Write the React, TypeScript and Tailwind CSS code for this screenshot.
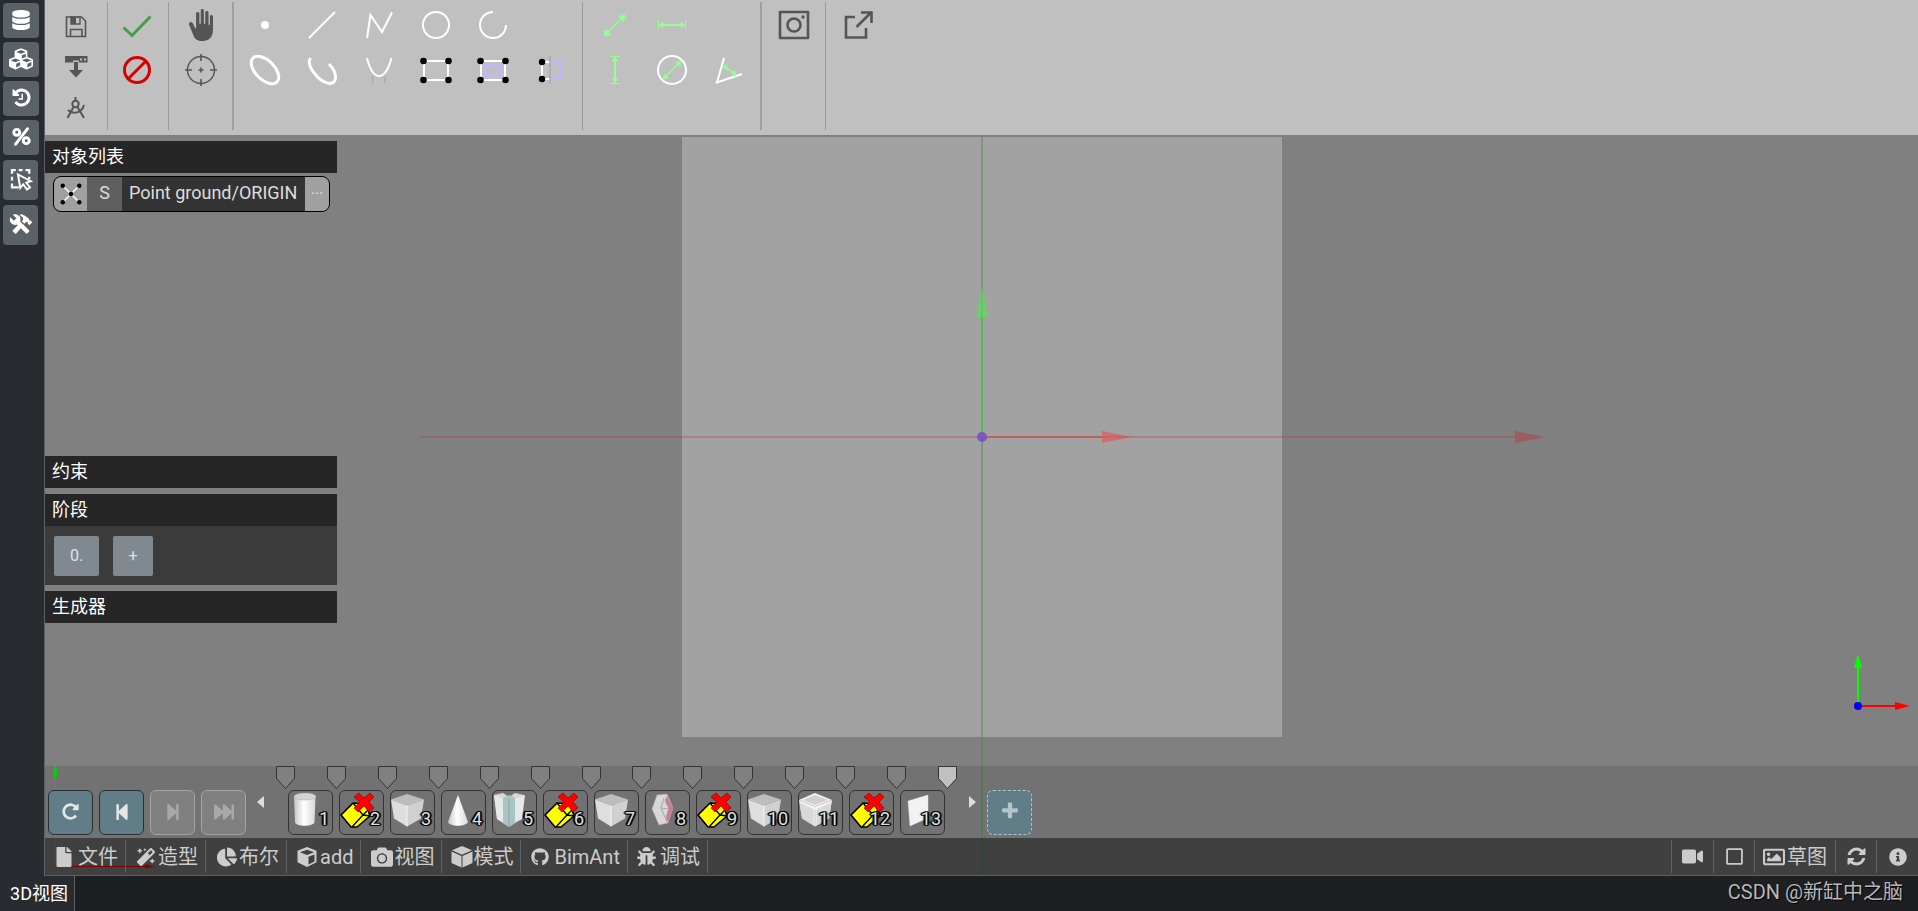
import type { ReactNode } from "react";
import {
  FaDatabase, FaCubes, FaFile, FaMagic, FaChartPie, FaCamera, FaGithub, FaBug,
  FaVideo, FaRegSquare, FaRegImage, FaInfoCircle, FaStepBackward, FaStepForward, FaFastForward,
} from "react-icons/fa";
import { IoMdConstruct } from "react-icons/io";
import { IoHandRight } from "react-icons/io5";

const font = "font-[Roboto,'Noto_Sans_CJK_SC',sans-serif]";

function Glyph({ size = "size-8", children }: { size?: string; children: ReactNode }) {
  return (
    <svg viewBox="0 0 32 32" className={size} fill="none" aria-hidden="true">
      {children}
    </svg>
  );
}

const boldPaths = {
  plus: "M1600 736v192q0 40-28 68t-68 28h-416v416q0 40-28 68t-68 28h-192q-40 0-68-28t-28-68v-416h-416q-40 0-68-28t-28-68v-192q0-40 28-68t68-28h416v-416q0-40 28-68t68-28h192q40 0 68 28t28 68v416h416q40 0 68 28t28 68z",
  repeat: "M1664 256v448q0 26-19 45t-45 19h-448q-42 0-59-40-17-39 14-69l138-138q-148-137-349-137-104 0-198.500 40.500t-163.500 109.500-109.500 163.500-40.500 198.500 40.500 198.500 109.500 163.500 163.500 109.500 198.500 40.500q119 0 225-52t179-147q7-10 23-12 15 0 25 9l137 138q9 8 9.500 20.500t-7.500 22.500q-109 132-264 204.500t-327 72.500q-156 0-298-61t-245-164-164-245-61-298 61-298 164-245 245-164 298-61q147 0 284.500 55.500t244.500 156.500l130-129q29-31 70-14 39 17 39 59z",
  history: "M1664 896q0 156-61 298t-164 245-245 164-298 61q-172 0-327-72.500t-264-204.500q-7-10-6.500-22.500t8.500-20.500l137-138q10-9 25-9 16 2 23 12 73 95 179 147t225 52q104 0 198.500-40.500t163.500-109.500 109.500-163.500 40.500-198.500-40.500-198.500-109.500-163.500-163.500-109.500-198.500-40.500q-98 0-188 35.500t-160 101.500l137 138q31 30 14 69-17 40-59 40h-448q-26 0-45-19t-19-45v-448q0-42 40-59 39-17 69 14l130 129q107-101 244.500-156.500t284.500-55.500q156 0 298 61t245 164 164 245 61 298zm-640-288v448q0 14-9 23t-23 9h-320q-14 0-23-9t-9-23v-64q0-14 9-23t23-9h224v-352q0-14 9-23t23-9h64q14 0 23 9t9 23z",
  refresh: "M1639 1056q0 5-1 7-64 268-268 434.500t-478 166.500q-146 0-282.500-55t-243.500-157l-129 129q-19 19-45 19t-45-19-19-45v-448q0-26 19-45t45-19h448q26 0 45 19t19 45-19 45l-137 137q71 66 161 102t187 36q134 0 250-65t186-179q11-17 53-117 8-23 30-23h192q13 0 22.500 9.500t9.500 22.500zm25-800v448q0 26-19 45t-45 19h-448q-26 0-45-19t-19-45 19-45l138-138q-148-137-349-137-134 0-250 65t-186 179q-11 17-53 117-8 23-30 23h-199q-13 0-22.500-9.500t-9.500-22.500v-7q65-268 270-434.500t480-166.500q146 0 284 55.500t245 156.500l130-129q19-19 45-19t45 19 19 45z",
};

function BoldIcon({ name, size }: { name: keyof typeof boldPaths; size: string }) {
  return (
    <svg viewBox="0 0 1792 1792" className={size} fill="currentColor" aria-hidden="true">
      <path d={boldPaths[name]} />
    </svg>
  );
}

const SaveIcon = (
  <Glyph>
    <path d="M6.500 6h15l4 4v15.500h-19z" stroke="#555" strokeWidth="1.600" />
    <path d="M11 6h9v7h-9z" stroke="#555" strokeWidth="1.400" />
    <path d="M11 6h5v7h-5z" fill="#555" />
    <path d="M10.500 25v-6.500h11.500v6.500" stroke="#555" strokeWidth="1.600" />
  </Glyph>
);
const ImportIcon = (
  <Glyph>
    <path d="M5 5h22.500v6.500H5z" fill="#555" />
    <path d="M20 7.500h2v2h-2zM24 7.500h2v2h-2z" fill="#c0c0c0" />
    <path d="M13 9.500h6v2h-6z" fill="#c0c0c0" />
    <path d="M14 11h4v8h5l-7 7.500-7-7.500h5z" fill="#555" />
  </Glyph>
);
const CompassIcon = (
  <Glyph>
    <g stroke="#555" strokeWidth="2">
      <circle cx="15.500" cy="12" r="3.200" />
      <path d="M15.500 5v4M13.500 15L7.500 26M17.500 15L24 26M8 18c5 5 14 3 16-5" />
    </g>
  </Glyph>
);
const CheckIcon = (
  <Glyph><path d="M2.500 18.500l8.500 8L29.500 7.500" stroke="#43a047" strokeWidth="3" /></Glyph>
);
const CancelIcon = (
  <Glyph>
    <circle cx="16" cy="16" r="12.500" stroke="#d50000" strokeWidth="3" />
    <path d="M7.500 24.500l17-17" stroke="#d50000" strokeWidth="3" />
  </Glyph>
);
const CrossIcon = (
  <Glyph>
    <circle cx="16" cy="16" r="13.500" stroke="#555" strokeWidth="1.400" />
    <path d="M16 0v7M16 25v7M0 16h7M25 16h7" stroke="#555" strokeWidth="1.600" />
    <path d="M16 13.500v5M13.500 16h5" stroke="#555" strokeWidth="1.600" />
  </Glyph>
);
const CaptureIcon = (
  <Glyph>
    <path d="M2 3h28v26H2z" stroke="#555" strokeWidth="2.600" strokeLinejoin="round" />
    <circle cx="16" cy="16" r="6.500" stroke="#555" strokeWidth="2.600" />
    <path d="M23.500 6.500h3v3h-3z" fill="#555" />
  </Glyph>
);
const ExternalIcon = (
  <Glyph>
    <path d="M13 8H4v20.500h20V19M14.500 18L28 4.500M19 3.500h10.500V14" stroke="#555" strokeWidth="2.600" />
  </Glyph>
);

const corners = (
  <g fill="#000">
    <circle cx="3.500" cy="7" r="3.300" />
    <circle cx="28.500" cy="7" r="3.300" />
    <circle cx="3.500" cy="26" r="3.300" />
    <circle cx="28.500" cy="26" r="3.300" />
  </g>
);

const sketchTools: [string, ReactNode][] = [
  ["Point", <circle cx="16" cy="16" r="4" fill="#fff" />],
  ["Line", <path d="M3 29L29 3" stroke="#fff" strokeWidth="2" />],
  ["Polyline", <path d="M4 29L7.500 6l11.500 17L29 3.500" stroke="#fff" strokeWidth="2" />],
  ["Circle", <circle cx="16" cy="16" r="13" stroke="#fff" strokeWidth="2" />],
  ["Arc", <path d="M16 3a13 13 0 1 0 13 13" stroke="#fff" strokeWidth="2" />],
  ["", null],
  ["Ellipse", <ellipse cx="16" cy="16" rx="17" ry="9.500" transform="rotate(45 16 16)" stroke="#fff" strokeWidth="3" />],
  ["Ellipse arc", <path d="M4.500 4C-.500 11 13 29 24 29.500C32 29 31 18 23 10" stroke="#fff" strokeWidth="3" />],
  ["Curve", <><path d="M9.500 22v7M22.500 22l-1 7" stroke="#aaa" strokeWidth="1.400" /><path d="M4 4c6 24 18 24 24.500 0" stroke="#fff" strokeWidth="2" /></>],
  ["Rectangle", <><path d="M4 7h24v19H4z" stroke="#fff" strokeWidth="2" />{corners}</>],
  ["Offset", <><path d="M4 7h24v19H4z" stroke="#fff" strokeWidth="2" /><path d="M8 11h16v11H8z" fill="#c0c0c0" stroke="#c0b8f8" strokeWidth="3" />{corners}</>],
  ["Mirror", <><path d="M16 8H8v17h8" stroke="#fff" strokeWidth="2" /><path d="M17 8h9v17h-9" stroke="#c0b8f8" strokeWidth="2.400" /><path d="M16 2v28" stroke="#aaa" strokeWidth="1.500" /><g fill="#000"><circle cx="8" cy="8" r="3.200" /><circle cx="8" cy="25" r="3.200" /></g></>],
];

const green = "#98fb98";
const dimensionTools: [string, ReactNode][] = [
  ["Distance", <g stroke={green} fill={green}><path d="M7 25L25 7" strokeWidth="1.600" /><path d="M4 22l5 6M22 4l6 6" /><path d="M5 27l1.500-6.500 5 5zM26 6l-6.500 1.500 5 5z" /></g>],
  ["Horizontal dimension", <g stroke={green} fill={green}><path d="M5 16h22" strokeWidth="2" /><path d="M2.500 11v10M29.500 11v10" /><path d="M3 16l4-2.500v5zM29 16l-4-2.500v5z" /></g>],
  ["", null],
  ["Vertical dimension", <g stroke={green} fill={green}><path d="M16 5v22" strokeWidth="2" /><path d="M11 2.500h10M11 29.500h10" /><path d="M16 3l-2.500 4h5zM16 29l-2.500-4h5z" /></g>],
  ["Diameter", <><circle cx="16" cy="16" r="14" stroke="#fff" strokeWidth="2" /><g stroke={green} fill={green}><path d="M8 24L24 8" strokeWidth="1.600" /><path d="M7 25l1.500-5 4 4zM25 7l-5 1.500 4 4z" /></g></>],
  ["Angle", <><path d="M11 4L4 28.500l25-8.500" stroke="#fff" strokeWidth="2" /><g stroke={green} fill={green}><path d="M10 13q8 1 11 9" fill="none" strokeWidth="1.600" /><path d="M9.500 12.500l4.500-1.500v5zM21.500 22.500l2-5h-5z" /></g></>],
];

function Tool({ label, children }: { label: string; children: ReactNode }) {
  return (
    <button type="button" aria-label={label} className="flex h-[45px] w-[57px] items-center justify-center">
      {children}
    </button>
  );
}

function ToolGrid({ tools, cols }: { tools: [string, ReactNode][]; cols: string }) {
  return (
    <div className={`grid ${cols}`}>
      {tools.map(([label, art], i) =>
        label ? <Tool key={i} label={label}><Glyph>{art}</Glyph></Tool> : <span key={i} />
      )}
    </div>
  );
}

function Toolbar() {
  return (
    <div className="flex h-[135px] shrink-0 bg-[#c0c0c0] pt-[2px] pb-[5px]">
      <div className="flex w-[63px] flex-col items-center border-r border-[#999] pt-[6px]">
        <button type="button" aria-label="Save" className="h-[37px]">{SaveIcon}</button>
        <button type="button" aria-label="Export" className="h-[43px]">{ImportIcon}</button>
        <button type="button" aria-label="Drafting" className="h-10">{CompassIcon}</button>
      </div>
      <div className="flex w-[61px] flex-col items-start border-r border-[#999]">
        <Tool label="Accept">{CheckIcon}</Tool>
        <Tool label="Cancel">{CancelIcon}</Tool>
      </div>
      <div className="border-r-2 border-[#a0a0a0] px-[3px]">
        <Tool label="Pan"><IoHandRight className="size-8 text-[#555]" /></Tool>
        <Tool label="Center view">{CrossIcon}</Tool>
      </div>
      <div className="border-r border-[#999] pr-1 pl-[2px]"><ToolGrid tools={sketchTools} cols="grid-cols-6" /></div>
      <div className="border-r-2 border-[#a0a0a0] px-[3px]"><ToolGrid tools={dimensionTools} cols="grid-cols-3" /></div>
      <div className="border-r border-[#999] px-[3px]"><Tool label="Screenshot">{CaptureIcon}</Tool></div>
      <div className="px-[3px]"><Tool label="Open outside">{ExternalIcon}</Tool></div>
    </div>
  );
}

function SideButton({ label, children, tall }: { label: string; children: ReactNode; tall?: boolean }) {
  return (
    <button type="button" aria-label={label} className={`flex items-center justify-center rounded bg-[#5a6268] pb-[2px] text-white ${tall ? "mt-px h-10 w-[35px]" : "h-[35px] w-9"}`}>
      {children}
    </button>
  );
}

function Sidebar() {
  return (
    <nav className="flex w-[45px] shrink-0 flex-col gap-1 border-r border-[#5a6268] bg-[#282c30] pt-[3px] pl-[3px]">
      <SideButton label="Data"><FaDatabase className="size-5" /></SideButton>
      <SideButton label="Models"><FaCubes className="size-6" /></SideButton>
      <SideButton label="History"><BoldIcon name="history" size="size-[21px]" /></SideButton>
      <SideButton label="Expressions">
        <Glyph size="size-[19px]">
          <g stroke="#fff" strokeWidth="5">
            <circle cx="8" cy="9" r="5" />
            <circle cx="24" cy="23" r="5" />
            <path d="M26 3L6 29" strokeLinecap="round" />
          </g>
        </Glyph>
      </SideButton>
      <SideButton label="Selection" tall>
        <Glyph size="size-6">
          <path d="M13 27H4v-5M4 18v-5M4 9V4h5M13 4h5M22 4h5v5M27 13v3" stroke="#fff" strokeWidth="3" />
          <path d="M12 10l3 18 4-5 5 7 4-3-5-6 6-2z" stroke="#fff" strokeWidth="2.600" />
        </Glyph>
      </SideButton>
      <SideButton label="Tools" tall><IoMdConstruct className="size-6" /></SideButton>
    </nav>
  );
}

function Scene() {
  return (
    <div className="absolute inset-0 flex items-center justify-center overflow-hidden bg-[#808080] pb-[2px]">
      <svg viewBox="-600 -450 1200 900" className="h-[900px] w-[1200px] shrink-0" aria-hidden="true">
        <path d="M-300-300h600v600h-600z" fill="#a2a2a2" />
        <path d="M-562 0H533" stroke="#b43c3c" strokeOpacity=".3" strokeWidth="2" />
        <path d="M533-6l30 6-30 6z" fill="#b43c3c" fillOpacity=".5" />
        <path d="M0-450V450" stroke="#3c963c" strokeOpacity=".45" strokeWidth="2" />
        <path d="M0 0h120" stroke="#dc3c3c" strokeOpacity=".5" strokeWidth="2" />
        <path d="M120-6l30 6-30 6z" fill="#e65050" fillOpacity=".6" />
        <path d="M0 0v-120" stroke="#3cd23c" strokeOpacity=".6" strokeWidth="2" />
        <path d="M-6-120l6-30 6 30z" fill="#50e650" fillOpacity=".6" />
        <circle r="5" fill="#7850c8" fillOpacity=".9" />
      </svg>
      <svg viewBox="0 0 110 110" className="absolute bottom-0 left-0 size-[110px]" aria-hidden="true">
        <path d="M10.500 100V8" stroke="#00e600" />
        <path d="M8 11L9.500 0h1.500l1.500 11z" fill="#00f000" />
        <path d="M11 100.500h92" stroke="#f00" />
        <path d="M100 98.500l10 2-10 2z" fill="#f00" />
      </svg>
    </div>
  );
}

function PanelTitle({ children }: { children: ReactNode }) {
  return <h2 className="h-8 bg-[#262626] pl-[7px] text-lg leading-[31px] text-white">{children}</h2>;
}

function Panels() {
  return (
    <div className="flex w-[292px] flex-col gap-[6px] pt-[6px]">
      <section className="h-[309px]">
        <PanelTitle>对象列表</PanelTitle>
        <div className="mt-[3px] mr-[7px] ml-2 flex h-9 overflow-hidden rounded-lg border border-black bg-[#333] text-lg text-[#ddd]">
          <button type="button" aria-label="Highlight" className="flex w-[33px] items-center justify-center bg-[#a0a0a0]">
            <Glyph size="size-6">
              <path d="M5 5l22 22M27 5L5 27" stroke="#fff" strokeWidth="2" />
              <g fill="#000">
                <circle cx="5" cy="5" r="3" />
                <circle cx="27" cy="5" r="3" />
                <circle cx="5" cy="27" r="3" />
                <circle cx="27" cy="27" r="3" />
                <circle cx="16" cy="16" r="3" />
              </g>
            </Glyph>
          </button>
          <span className="w-[35px] bg-[#5f5f5f] text-center leading-8">S</span>
          <span className="flex-1 pl-[7px] leading-8 whitespace-nowrap">Point ground/ORIGIN</span>
          <button type="button" aria-label="More" className="w-6 bg-[#a0a0a0] text-base leading-8">···</button>
        </div>
      </section>
      <PanelTitle>约束</PanelTitle>
      <section>
        <PanelTitle>阶段</PanelTitle>
        <div className="flex h-[59px] gap-[14px] bg-[#3b3b3b] px-[9px] pt-[10px] text-base text-[#e0e0e0]">
          <button type="button" className="h-10 w-[45px] rounded-xs bg-[#80898f]">0.</button>
          <button type="button" className="size-10 rounded-xs bg-[#80898f]">+</button>
        </div>
      </section>
      <PanelTitle>生成器</PanelTitle>
    </div>
  );
}

const art: Record<string, ReactNode> = {
  cylinder: (
    <>
      <path d="M6 7l1 25c0 5 19 5 19.500 0L27.500 7z" fill="url(#shade)" />
      <ellipse cx="17" cy="6.500" rx="11" ry="3.500" fill="#d4d4d4" stroke="#aaa" strokeWidth=".500" />
    </>
  ),
  box: (
    <>
      <path d="M1 9.500L17 4l17 5.500-17 6z" fill="#bdbdbd" />
      <path d="M1 9.500l16 6v21L4 28.500z" fill="#dedede" />
      <path d="M34 9.500l-17 6v21l14-8z" fill="#d0d0d0" />
      <path d="M17 15.500v21" stroke="#f4f4f4" />
    </>
  ),
  bevel: (
    <>
      <path d="M1 10l16-7 17 7-3 18-14 8.500L4 28z" fill="#f4f4f4" />
      <path d="M5 10l12-5 13 5-13 5z" fill="#cfcfcf" />
      <path d="M1.500 12.500L15.500 19v16.500L4 28.500zM33.500 12.500L18.500 19v16.500L31 28.500z" fill="#d8d8d8" />
      <path d="M1 10l16 6.500L34 10M17 19.500v16" stroke="#999" strokeWidth=".500" />
    </>
  ),
  cone: <path d="M17 5L7 32c2 5 18 5 20 0z" fill="url(#shade)" />,
  shell: (
    <>
      <path d="M2 5l9-2 6 4 6-4 9 2-3 24-12 8L5 29z" fill="#d8d8d8" />
      <path d="M2 5l10 4v24l-7-4zM33 5L22 9v24l8-4z" fill="#e8e8e8" />
      <path d="M11 8l6-3 6 3v25l-6 4-6-4z" fill="#a9c4c4" />
      <path d="M17 9v28" stroke="#86a5a5" />
    </>
  ),
  ring: (
    <>
      <path d="M12 5l10-1 6 14-5 15-9 2-7-16z" fill="#d8d8d8" stroke="#aaa" strokeWidth=".500" />
      <path d="M22 6l6 12-5 15-2-5 3-10-4-8z" fill="#d07898" />
      <path d="M19 8l-3 10 6 14M16 18l8 1M20 11l4 8-3 8" stroke="#999" strokeWidth=".800" />
    </>
  ),
  plane: <path d="M8 11l20-6v23L10 36z" fill="#f2f2f2" stroke="#ddd" strokeWidth=".500" />,
  deleted: (
    <>
      <path d="M2 25l12-12 13 1 4 12-13 11h-6z" fill="#ff0" stroke="#000" strokeWidth="1.600" strokeLinejoin="round" />
      <path d="M14 13l10 12-11 12M24 25l7-7M24 25l7 1" stroke="#000" strokeWidth="1.400" />
      <path d="M20 3l5 5 6-5 4 4-5 5 5 6-5 4-5-6-6 6-4-4 6-6-6-5z" fill="#f00" stroke="#700" strokeWidth=".600" />
    </>
  ),
};

const steps = ["cylinder", "deleted", "box", "cone", "shell", "deleted", "box", "ring", "deleted", "box", "bevel", "deleted", "plane"];

function Control({ label, off, children }: { label: string; off?: boolean; children: ReactNode }) {
  return (
    <button
      type="button"
      aria-label={label}
      disabled={off}
      className={`flex size-[45px] items-center justify-center rounded-md border pb-[2px] ${off ? "border-[#a5a5a5] bg-[#808080] text-[#a8a8a8]" : "border-[#2b2f31] bg-[#607d88] text-[#e5e5e5]"}`}
    >
      {children}
    </button>
  );
}

function Timeline() {
  return (
    <div className="relative flex h-[72px] shrink-0 items-end bg-black/11 pb-[3px] pl-[3px]">
      <svg className="absolute size-0" aria-hidden="true">
        <defs>
          <linearGradient id="shade">
            <stop offset="0" stopColor="#c4c4c4" />
            <stop offset=".45" stopColor="#fff" />
            <stop offset="1" stopColor="#d8d8d8" />
          </linearGradient>
        </defs>
      </svg>
      <div className="flex gap-[6px]">
        <Control label="Rebuild"><BoldIcon name="repeat" size="size-[19px]" /></Control>
        <Control label="Step back"><FaStepBackward className="size-[18px]" /></Control>
        <Control label="Step forward" off><FaStepForward className="size-[18px]" /></Control>
        <Control label="Fast forward" off><FaFastForward className="size-5" /></Control>
      </div>
      <button type="button" aria-label="Scroll left" className="mb-[27px] flex w-[30px] justify-center pr-[2px]">
        <svg viewBox="0 0 7 12" className="h-3 w-[7px]" fill="#ddd"><path d="M7 0v12L0 6z" /></svg>
      </button>
      <div className="flex flex-col gap-px">
        <div className="flex justify-between">
          {Array.from({ length: 14 }, (_, i) => (
            <svg key={i} viewBox="0 0 19 23" className="h-[23px] w-[19px]" aria-hidden="true">
              <path d="M.500.500h18v12L9.500 22.500.500 12.500z" fill={i === 13 ? "#c0c0c0" : "#808080"} stroke="#333" />
            </svg>
          ))}
        </div>
        <ol className="flex gap-[6px] px-3">
          {steps.map((name, i) => (
            <li key={i}>
              <button type="button" className="relative block size-[45px] rounded-md border border-[#333]">
                <svg viewBox="1 1 43 43" className="size-[43px]" fill="none" aria-hidden="true">{art[name]}</svg>
                <span className="absolute right-[3px] bottom-[5px] text-lg leading-5 text-[#e0e0e0] [text-shadow:1px_1px_0_#000,-1px_-1px_0_#000,1px_-1px_0_#000,-1px_1px_0_#000,2px_0_1px_#000,-2px_0_1px_#000]">{i + 1}</span>
              </button>
            </li>
          ))}
        </ol>
      </div>
      <button type="button" aria-label="Scroll right" className="mb-[27px] flex w-[30px] justify-center">
        <svg viewBox="0 0 7 12" className="h-3 w-[7px]" fill="#ddd"><path d="M0 0v12l7-6z" /></svg>
      </button>
      <button type="button" aria-label="Add" className="flex size-[45px] items-center justify-center rounded-md border border-dashed border-[#b5c4ca] bg-[#607d88] pb-[3px] text-[#b5c4ca]">
        <BoldIcon name="plus" size="size-5" />
      </button>
    </div>
  );
}

const CubeOpen = (
  <svg viewBox="0 0 22 22" className="size-[22px]" aria-hidden="true">
    <path d="M11 1l9.500 3.800v11.400L11 21l-9.500-4.800V4.800z" fill="currentColor" />
    <path d="M11 3.700l7 2.600-7 2.700-7-2.700zM12.500 10.800l6-2.400v7.200l-6 3z" fill="#404040" />
  </svg>
);
const CubeSolid = (
  <svg viewBox="0 0 22 22" className="size-[22px]" aria-hidden="true">
    <path d="M11 0l10 4.300-10 4.500L1 4.300zM.500 5.500l10 4.500v11.500l-10-4.500zM21.500 5.500l-10 4.500v11.500l10-4.500z" fill="currentColor" />
  </svg>
);

const menus: [string, ReactNode, string][] = [
  ["文件", <FaFile className="size-5" />, "w-[25px] pr-1"],
  ["造型", <FaMagic className="size-[18px]" />, "w-6"],
  ["布尔", <FaChartPie className="size-5" />, "w-[25px]"],
  ["add", CubeOpen, "w-[25px] pr-[2px]"],
  ["视图", <FaCamera className="size-[22px]" />, "w-[25px]"],
  ["模式", CubeSolid, "w-[23px]"],
  ["BimAnt", <FaGithub className="size-[18px]" />, "w-[25px] pr-[3px]"],
  ["调试", <FaBug className="size-[19px]" />, "w-6 pr-[2px]"],
];

function MenuBar() {
  return (
    <div className="relative flex h-[38px] shrink-0 justify-between border-b border-[#5a6268] bg-black/50 py-[2px] text-xl text-[#ccc]">
      <div className="flex">
        {menus.map(([label, icon, slot]) => (
          <button key={label} type="button" className="flex items-center border-r border-[#5a6268] pr-[7px] pl-2 leading-8 whitespace-nowrap">
            <span className={`flex justify-center ${slot}`}>{icon}</span>
            {label}
          </button>
        ))}
      </div>
      <div className="flex *:flex *:items-center *:justify-center *:border-l *:border-[#5a6268]">
        <button type="button" aria-label="Camera" className="w-[42px]"><FaVideo className="size-[21px]" /></button>
        <button type="button" aria-label="Window" className="w-[41px]">
          <FaRegSquare className="size-[19px]" />
        </button>
        <button type="button" className="w-[81px] gap-[2px] leading-8"><FaRegImage className="size-[22px]" />草图</button>
        <button type="button" aria-label="Refresh" className="w-[41px]"><BoldIcon name="refresh" size="size-[21px]" /></button>
        <button type="button" aria-label="Info" className="w-[42px]"><FaInfoCircle className="size-[18px]" /></button>
      </div>
    </div>
  );
}

export default function App() {
  return (
    <div className={`flex h-screen flex-col overflow-hidden bg-[#1e1f21] ${font}`}>
      <div className="flex min-h-0 flex-1">
        <Sidebar />
        <main className="relative flex min-w-0 flex-1 flex-col">
          <Scene />
          <div className="relative flex min-h-0 flex-1 flex-col">
            <Toolbar />
            <div className="relative min-h-0 flex-1">
              <Panels />
              <svg viewBox="0 0 70 70" className="absolute right-0 bottom-[50px] size-[70px]" aria-hidden="true">
                <path d="M10 58V20" stroke="#0f0" strokeWidth="2" />
                <path d="M6 22l4-14 4 14z" fill="#0f0" />
                <path d="M10 60h40" stroke="#f00" strokeWidth="2" />
                <path d="M47 56l15 4-15 4z" fill="#f00" />
                <circle cx="10" cy="60" r="4" fill="#00f" />
              </svg>
            </div>
          </div>
          <Timeline />
          <MenuBar />
        </main>
      </div>
      <footer className="flex h-[35px] shrink-0 justify-between">
        <button type="button" className="w-[75px] border-r border-[#5a6268] bg-[#282c30] pl-1 text-lg leading-6 text-white">3D视图</button>
        <span className="pr-[15px] text-xl leading-8 text-[#b8b8b8] [text-shadow:1px_1px_1px_#000]">CSDN @新缸中之脑</span>
      </footer>
    </div>
  );
}
